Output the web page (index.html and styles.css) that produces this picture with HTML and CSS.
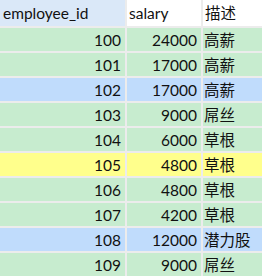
FILE: index.html
```html
<!DOCTYPE html>
<html lang="zh">
<head>
<meta charset="utf-8">
<link rel="stylesheet" href="styles.css">
</head>
<body>
<div class="grid">
  <div class="cell head id">employee_id</div>
  <div class="cell head plain">salary</div>
  <div class="cell head plain">描述</div>

  <div class="cell num green">100</div><div class="cell num green">24000</div><div class="cell txt green">高薪</div>
  <div class="cell num green">101</div><div class="cell num green">17000</div><div class="cell txt green">高薪</div>
  <div class="cell num blue">102</div><div class="cell num blue">17000</div><div class="cell txt blue">高薪</div>
  <div class="cell num green">103</div><div class="cell num green">9000</div><div class="cell txt green">屌丝</div>
  <div class="cell num green">104</div><div class="cell num green">6000</div><div class="cell txt green">草根</div>
  <div class="cell num yellow">105</div><div class="cell num yellow">4800</div><div class="cell txt yellow">草根</div>
  <div class="cell num green">106</div><div class="cell num green">4800</div><div class="cell txt green">草根</div>
  <div class="cell num green">107</div><div class="cell num green">4200</div><div class="cell txt green">草根</div>
  <div class="cell num blue">108</div><div class="cell num blue">12000</div><div class="cell txt blue">潜力股</div>
  <div class="cell num green">109</div><div class="cell num green">9000</div><div class="cell txt green">屌丝</div>
</div>
</body>
</html>
```
FILE: styles.css
```css
html, body {
  margin: 0;
  padding: 0;
  background: #ffffff;
}
.grid {
  display: grid;
  grid-template-columns: 125px 74px 1fr;
  grid-template-rows: 26px repeat(10, 23px);
  gap: 2px;
  background: #ececec;
  width: 262px;
  font-family: "Lato", "Noto Sans CJK SC", sans-serif;
  font-size: 15.5px;
  color: #111111;
}
.cell {
  display: flex;
  align-items: center;
  white-space: nowrap;
  overflow: hidden;
  line-height: 1;
  padding-top: 2px;
}
.head {
  padding-left: 2px;
  padding-top: 1px;
}
.head.id {
  background: #dae8f8;
  padding-left: 3px;
}
.head.plain {
  background: #ffffff;
}
.num {
  justify-content: flex-end;
  padding-right: 4px;
}
.txt {
  padding-left: 1px;
}
.green { background: #c7eccf; }
.blue { background: #c0dcfc; }
.yellow { background: #ffff8c; }
```
